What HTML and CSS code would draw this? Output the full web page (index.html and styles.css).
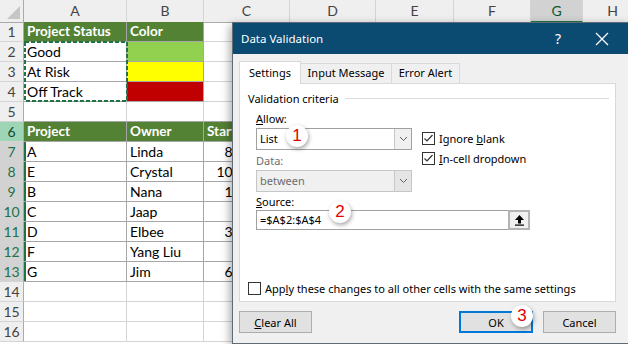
FILE: index.html
```html
<!DOCTYPE html>
<html lang="en">
<head>
    <meta charset="UTF-8">
    <meta name="viewport" content="width=device-width, initial-scale=1.0">
    <title>Data Validation</title>
    <link rel="stylesheet" href="styles.css">
</head>
<body>
    <div class="colheads">
        <div class="colhead corner"><i class="tri"></i></div>
        <div class="colhead">A</div>
        <div class="colhead">B</div>
        <div class="colhead">C</div>
        <div class="colhead">D</div>
        <div class="colhead">E</div>
        <div class="colhead">F</div>
        <div class="colhead picked">G</div>
        <div class="colhead">H</div>
    </div>

    <div class="rows">
        <div class="rowhead">1</div>
        <div class="cell boxed head">Project Status</div>
        <div class="cell boxed head">Color</div>
        <div class="cell"></div>

        <div class="rowhead">2</div>
        <div class="cell boxed">Good</div>
        <div class="cell boxed swatch-green"></div>
        <div class="cell"></div>

        <div class="rowhead">3</div>
        <div class="cell boxed">At Risk</div>
        <div class="cell boxed swatch-yellow"></div>
        <div class="cell"></div>

        <div class="rowhead">4</div>
        <div class="cell boxed">Off Track</div>
        <div class="cell boxed swatch-red"></div>
        <div class="cell"></div>

        <div class="rowhead">5</div>
        <div class="cell edge"></div>
        <div class="cell edge"></div>
        <div class="cell edge"></div>

        <div class="rowhead row-active">6</div>
        <div class="cell boxed head">Project</div>
        <div class="cell boxed head">Owner</div>
        <div class="cell boxed head">Start</div>

        <div class="rowhead row-sel">7</div>
        <div class="cell boxed sel">A</div>
        <div class="cell boxed">Linda</div>
        <div class="cell boxed num">8/1/2020</div>

        <div class="rowhead row-sel">8</div>
        <div class="cell boxed sel">E</div>
        <div class="cell boxed">Crystal</div>
        <div class="cell boxed num">10/1/2020</div>

        <div class="rowhead row-sel">9</div>
        <div class="cell boxed sel">B</div>
        <div class="cell boxed">Nana</div>
        <div class="cell boxed num">1/5/2021</div>

        <div class="rowhead row-sel">10</div>
        <div class="cell boxed sel">C</div>
        <div class="cell boxed">Jaap</div>
        <div class="cell boxed num">5/1/21</div>

        <div class="rowhead row-sel">11</div>
        <div class="cell boxed sel">D</div>
        <div class="cell boxed">Elbee</div>
        <div class="cell boxed num">3/2/2021</div>

        <div class="rowhead row-sel">12</div>
        <div class="cell boxed sel">F</div>
        <div class="cell boxed">Yang Liu</div>
        <div class="cell boxed num">7/1/21</div>

        <div class="rowhead row-sel">13</div>
        <div class="cell boxed sel">G</div>
        <div class="cell boxed">Jim</div>
        <div class="cell boxed num">6/1/2021</div>

        <div class="rowhead">14</div>
        <div class="cell"></div>
        <div class="cell"></div>
        <div class="cell"></div>

        <div class="rowhead">15</div>
        <div class="cell"></div>
        <div class="cell"></div>
        <div class="cell"></div>

        <div class="rowhead">16</div>
        <div class="cell"></div>
        <div class="cell"></div>
        <div class="cell"></div>
    </div>

    <!-- copy marquee around A2:A4 -->
    <svg class="marquee" width="104" height="61" viewBox="0 0 104 61">
        <rect x="1" y="1" width="102" height="59" fill="none" stroke="#217346" stroke-width="2" stroke-dasharray="4 2"/>
    </svg>

    <div class="dialog">
        <div class="titlebar">
            <span class="title">Data Validation</span>
            <span class="help">?</span>
            <svg class="close" width="14" height="14" viewBox="0 0 14 14">
                <path d="M1 1L13 13M13 1L1 13" stroke="#fff" stroke-width="1.3"/>
            </svg>
        </div>

        <div class="tabs">
            <div class="tab active">Settings</div>
            <div class="tab tab-input">Input Message</div>
            <div class="tab tab-error">Error Alert</div>
        </div>

        <div class="panel">
            <div class="group-title"><span>Validation criteria</span><i class="rule"></i></div>

            <div class="criteria">
                <div class="fields">
                    <div class="field-label"><u>A</u>llow:</div>
                    <div class="combo">
                        <span class="combo-value">List</span>
                        <span class="combo-arrow">
                            <svg width="9" height="6" viewBox="0 0 9 6"><path d="M1 1L4.5 4.5L8 1" fill="none" stroke="#606060" stroke-width="1"/></svg>
                        </span>
                    </div>
                    <div class="field-label disabled">Data:</div>
                    <div class="combo disabled">
                        <span class="combo-value">between</span>
                        <span class="combo-arrow">
                            <svg width="9" height="6" viewBox="0 0 9 6"><path d="M1 1L4.5 4.5L8 1" fill="none" stroke="#606060" stroke-width="1"/></svg>
                        </span>
                    </div>
                </div>
                <div class="checks">
                    <div class="check">
                        <svg width="13" height="13" viewBox="0 0 13 13"><rect x="0.5" y="0.5" width="12" height="12" fill="#fff" stroke="#333"/><path d="M2.5 6.5L5 9L10.5 3" fill="none" stroke="#333" stroke-width="1.2"/></svg>
                        <span>Ignore <u>b</u>lank</span>
                    </div>
                    <div class="check">
                        <svg width="13" height="13" viewBox="0 0 13 13"><rect x="0.5" y="0.5" width="12" height="12" fill="#fff" stroke="#333"/><path d="M2.5 6.5L5 9L10.5 3" fill="none" stroke="#333" stroke-width="1.2"/></svg>
                        <span><u>I</u>n-cell dropdown</span>
                    </div>
                </div>
            </div>

            <div class="field-label source-label"><u>S</u>ource:</div>
            <div class="source">
                <span class="source-value">=$A$2:$A$4</span>
                <span class="collapse">
                    <svg width="11" height="12" viewBox="0 0 11 12"><path d="M5.5 1L1 6H4V9.5H7V6H10Z" fill="#000"/><rect x="1" y="10.5" width="9" height="1.2" fill="#000"/></svg>
                </span>
            </div>

            <div class="check apply">
                <svg width="13" height="13" viewBox="0 0 13 13"><rect x="0.5" y="0.5" width="12" height="12" fill="#fff" stroke="#333"/></svg>
                <span>App<u>l</u>y these changes to all other cells with the same settings</span>
            </div>
        </div>

        <div class="buttons">
            <button class="btn"><u>C</u>lear All</button>
            <div class="btn-group">
                <button class="btn default">OK</button>
                <button class="btn">Cancel</button>
            </div>
        </div>
    </div>

    <div class="badge badge-one">1</div>
    <div class="badge badge-two">2</div>
    <div class="badge badge-three">3</div>
</body>
</html>
```

FILE: styles.css
```css
*{
    box-sizing: border-box;
}

body{
    margin: 0;
    width: 628px;
    height: 344px;
    overflow: hidden;
    position: relative;
    background: #fff;
    font-family: Lato, "Liberation Sans", sans-serif;
}

/* sheet */
.colheads{
    display: grid;
    grid-template-columns: 24px 103px 77px 86px 86px 78px 77px 52px 60px;
    height: 22px;
}

.colhead{
    background: #efefef;
    border-right: 1px solid #d4d4d4;
    border-bottom: 1px solid #ababab;
    color: #444;
    font-size: 14px;
    line-height: 21px;
    text-align: center;
}

.colhead.corner{
    position: relative;
    border-right-color: #ababab;
}

.tri{
    position: absolute;
    right: 3px;
    bottom: 3px;
    width: 0;
    height: 0;
    border-left: 13px solid transparent;
    border-bottom: 13px solid #c6c6c6;
}

.colhead.picked{
    background: #d2d2d2;
    border-bottom: 2px solid #217346;
    color: #0d5a2c;
}

.rows{
    display: grid;
    grid-template-columns: 24px 103px 77px 86px;
    grid-auto-rows: 20px;
    height: 322px;
}

.rowhead{
    background: #efefef;
    border-right: 1px solid #ababab;
    border-bottom: 1px solid #d4d4d4;
    color: #444;
    font-size: 14px;
    line-height: 19px;
    text-align: center;
}

.rowhead.row-active{
    background: #9fd5b7;
    color: #0d4b26;
}

.rowhead.row-sel{
    background: #d2d2d2;
    color: #217346;
}

.cell{
    border-right: 1px solid #d4d4d4;
    border-bottom: 1px solid #d4d4d4;
    padding: 0 3px;
    font-size: 14px;
    line-height: 19px;
    white-space: nowrap;
    overflow: hidden;
    color: #000;
}

.cell.boxed,
.cell.edge{
    border-bottom-color: #a6a6a6;
}

.cell.boxed{
    border-right-color: #a6a6a6;
}

.cell.head{
    background: #548235;
    color: #fff;
    font-size: 13.5px;
    font-weight: bold;
}

.cell.num{
    text-align: right;
}

.cell.sel{
    box-shadow: inset 2px 0 0 #217346;
}

.swatch-green{ background: #92d050; }
.swatch-yellow{ background: #ffff00; }
.swatch-red{ background: #c00000; }

.marquee{
    position: absolute;
    left: 24px;
    top: 41px;
}

/* dialog */
.dialog{
    position: absolute;
    left: 232px;
    top: 22px;
    width: 400px;
    height: 322px;
    background: #f0f0f0;
    border: 1px solid #5f6b75;
    box-shadow: -2px 3px 9px rgba(0,0,0,0.35);
    font-family: "Noto Sans", sans-serif;
    font-size: 11px;
    color: #000;
}

.titlebar{
    display: flex;
    align-items: center;
    height: 31px;
    background: #0b4a71;
    color: #fff;
    padding-left: 8px;
}

.title{
    flex: 1;
    font-size: 11.5px;
}

.help{
    font-size: 14px;
    margin-right: 34px;
}

.close{
    margin-right: 22px;
}

.tabs{
    display: flex;
    align-items: flex-end;
    height: 22px;
    margin: 7px 0 0 6px;
}

.tab{
    height: 20px;
    line-height: 18px;
    text-align: center;
    border: 1px solid #d9d9d9;
    border-bottom: none;
    border-left: none;
    background: #f0f0f0;
}

.tab.active{
    width: 62px;
    height: 23px;
    line-height: 21px;
    border-left: 1px solid #d9d9d9;
    background: #fff;
    position: relative;
    margin-bottom: -1px;
}

.tab-input{
    width: 91px;
}

.tab-error{
    width: 68px;
}

.panel{
    width: 377px;
    height: 219px;
    margin-left: 6px;
    background: #fff;
    border: 1px solid #d9d9d9;
    padding: 6px 0 0 0;
}

.group-title{
    display: flex;
    align-items: center;
    height: 16px;
    padding: 0 6px 0 8px;
}

.rule{
    flex: 1;
    height: 1px;
    background: #dcdcdc;
    margin-left: 6px;
}

.criteria{
    display: flex;
    margin-top: 5px;
    padding-left: 16px;
}

.fields{
    width: 156px;
}

.field-label{
    height: 16px;
    line-height: 16px;
    margin-bottom: 1px;
}

.field-label.disabled{
    color: #6d6d6d;
    margin-top: 3px;
}

.combo{
    display: flex;
    height: 22px;
    border: 1px solid #a0a0a0;
    background: #fff;
}

.combo-value{
    flex: 1;
    line-height: 20px;
    padding-left: 3px;
}

.combo-arrow{
    width: 17px;
    display: flex;
    align-items: center;
    justify-content: center;
    background: #f0f0f0;
    border-left: 1px solid #c8c8c8;
}

.combo.disabled{
    background: #f0f0f0;
    border-color: #c6c6c6;
    color: #6d6d6d;
}

.combo.disabled .combo-arrow{
    background: #e5e5e5;
}

.checks{
    margin-left: 10px;
    padding-top: 17px;
}

.check{
    display: flex;
    align-items: center;
    gap: 4px;
    height: 20px;
}

.source-label{
    margin: 2px 0 0 16px;
}

.source{
    display: flex;
    width: 274px;
    height: 20px;
    margin-left: 16px;
    border: 1px solid #a0a0a0;
}

.source-value{
    flex: 1;
    line-height: 18px;
    padding-left: 3px;
}

.collapse{
    width: 22px;
    display: flex;
    align-items: center;
    justify-content: center;
    background: #f0f0f0;
    border: 2px solid #b4b4b4;
    margin: -1px -1px -1px 0;
}

.check.apply{
    margin: 48px 0 0 8px;
}

.buttons{
    display: flex;
    justify-content: space-between;
    width: 377px;
    margin: 9px 0 0 6px;
}

.btn-group{
    display: flex;
    gap: 10px;
}

.btn{
    width: 73px;
    height: 22px;
    padding: 0;
    font-family: "Noto Sans", sans-serif;
    font-size: 11px;
    color: #000;
    background: #e1e1e1;
    border: 1px solid #adadad;
}

.btn.default{
    width: 74px;
    border: 2px solid #0078d7;
}

/* numbered callouts */
.badge{
    position: absolute;
    width: 22px;
    height: 22px;
    border-radius: 50%;
    background: #fff;
    box-shadow: 1px 2px 4px rgba(0,0,0,0.35);
    color: #e00000;
    font-family: "Liberation Sans", sans-serif;
    font-size: 17px;
    line-height: 22px;
    text-align: center;
}

.badge-one{ left: 286px; top: 125px; }
.badge-two{ left: 329px; top: 201px; }
.badge-three{ left: 511px; top: 305px; }
```
